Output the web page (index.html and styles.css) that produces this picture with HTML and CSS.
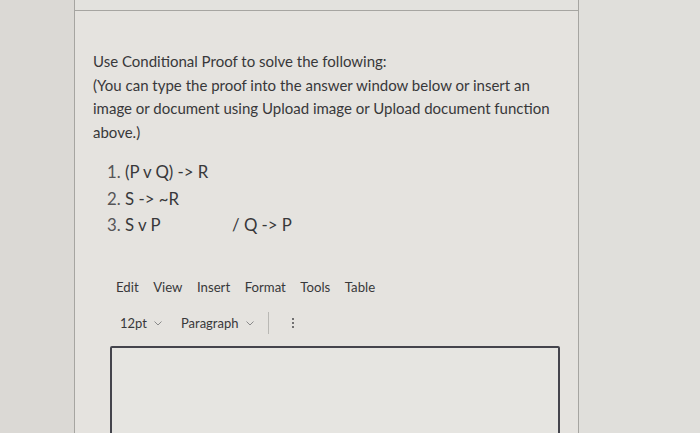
FILE: index.html
```html
<!DOCTYPE html>
<html>
<head>
<meta charset="utf-8">
<link rel="stylesheet" href="styles.css">
</head>
<body>
<div class="page">
  <div class="card-prev"></div>
  <div class="card">
    <div class="question">
      <p class="intro">Use Conditional Proof to solve the following:<br>(You can type the proof into the answer window below or insert an image or document using Upload image or Upload document function above.)</p>
      <div class="premises">
        <div class="premise"><span class="n">1.</span>&nbsp;(P v Q) -&gt; R</div>
        <div class="premise"><span class="n">2.</span>&nbsp;S -&gt; ~R</div>
        <div class="premise"><span class="num"><span class="n">3.</span>&nbsp;S v P</span><span class="concl">/ Q -&gt; P</span></div>
      </div>
    </div>
    <div class="editor">
      <div class="menubar">
        <span>Edit</span><span>View</span><span>Insert</span><span>Format</span><span>Tools</span><span>Table</span>
      </div>
      <div class="toolbar">
        <span class="tool">12pt <svg class="chev" viewBox="0 0 8 5" width="8" height="5"><path d="M0.5 0.5 L4 4 L7.5 0.5" fill="none" stroke="#8a8a8a" stroke-width="1"/></svg></span>
        <span class="tool para">Paragraph <svg class="chev" viewBox="0 0 8 5" width="8" height="5"><path d="M0.5 0.5 L4 4 L7.5 0.5" fill="none" stroke="#8a8a8a" stroke-width="1"/></svg></span>
        <span class="sep"></span>
        <span class="more"><i></i><i></i><i></i></span>
      </div>
      <div class="textarea"></div>
    </div>
  </div>
</div>
</body>
</html>
```
FILE: styles.css
```css
html, body {
  margin: 0;
  padding: 0;
}
body {
  width: 700px;
  height: 433px;
  overflow: hidden;
  background: linear-gradient(to right, #dbd9d5 0, #dbd9d5 74px, #e0dfdb 580px, #e0dfdb 100%);
  font-family: Lato, "Open Sans", sans-serif;
  color: #38383a;
}
.page {
  padding-left: 74px;
  width: 505px;
}
.card-prev {
  height: 10px;
  background: #e3e2de;
  border-left: 1px solid #a6a5a1;
  border-right: 1px solid #a6a5a1;
  border-bottom: 1px solid #a6a5a1;
}
.card {
  height: 450px;
  background: #e5e3df;
  border-left: 1px solid #a6a5a1;
  border-right: 1px solid #a6a5a1;
  padding-top: 39px;
  box-sizing: border-box;
}
.question {
  padding-left: 18px;
  padding-right: 20px;
}
.intro {
  margin: 0;
  font-size: 15px;
  line-height: 23.5px;
  width: 465px;
}
.premises {
  margin-top: 15px;
  padding-left: 14px;
  font-size: 16.8px;
  line-height: 26.5px;
}
.premise {
  display: flex;
}
.n {
  color: #555557;
}
.num {
  width: 125px;
}
.editor {
  margin-top: 38px;
  padding-left: 35px;
}
.menubar {
  display: flex;
  gap: 14.5px;
  font-size: 13.2px;
  padding-left: 6px;
  height: 20px;
  line-height: 20px;
}
.toolbar {
  display: flex;
  align-items: center;
  height: 24px;
  margin-top: 14px;
  padding-left: 10px;
  font-size: 13px;
}
.tool {
  display: flex;
  align-items: center;
  gap: 7px;
}
.para {
  margin-left: 19px;
}
.chev {
  margin-top: 1px;
}
.sep {
  width: 1px;
  height: 22px;
  background: #b9b8b4;
  margin-left: 14px;
}
.more {
  display: flex;
  flex-direction: column;
  gap: 2px;
  margin-left: 23px;
}
.more i {
  display: block;
  width: 2px;
  height: 2px;
  border-radius: 1px;
  background: #4a4a4d;
}
.textarea {
  margin-top: 11px;
  width: 446px;
  height: 120px;
  border: 2px solid #44444c;
  border-radius: 2px;
  background: #e6e5e1;
}
```
